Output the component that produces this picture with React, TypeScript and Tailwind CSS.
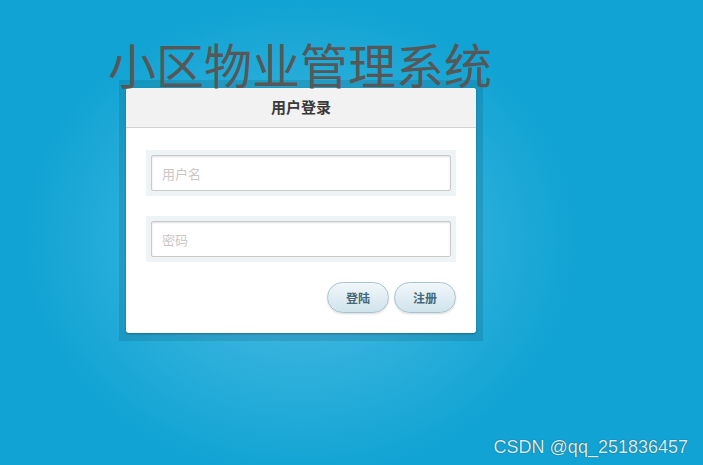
import React from 'react';

const cjk = "font-['Microsoft_YaHei','Noto_Sans_CJK_SC',sans-serif]";

function Field({ placeholder, type = 'text' }: { placeholder: string; type?: string }) {
  return (
    <div className="bg-[#eef3f6] p-[5px]">
      <input
        type={type}
        placeholder={placeholder}
        className={`block h-[36px] w-full rounded-[2px] border border-[#c9c9c9] bg-white px-[10px] text-[13px] text-[#333] shadow-[inset_0_1px_2px_rgba(0,0,0,0.12)] outline-none placeholder:text-[#cbc6c6] ${cjk}`}
      />
    </div>
  );
}

function PillButton({ label }: { label: string }) {
  return (
    <button
      className={`h-[31px] w-[62px] rounded-full border border-[#a9c4cc] bg-[linear-gradient(to_bottom,#f1f7fa,#cfe3ec)] text-[12px] font-semibold text-[#46697a] shadow-[0_1px_2px_rgba(0,0,0,0.15)] ${cjk}`}
    >
      {label}
    </button>
  );
}

export default function App() {
  return (
    <div className="relative h-[465px] w-full overflow-hidden bg-[radial-gradient(ellipse_280px_240px_at_300px_240px,#4abbe1_0%,#34b2dd_45%,#10a3d3_100%)]">
      <div className="pt-[39px]">
        <h1 className={`relative z-10 pl-[108px] text-[48px] leading-[48px] font-normal text-[#575757] ${cjk}`}>
          小区物业管理系统
        </h1>

        {/* login frame */}
        <div className="ml-[119px] mt-[-7px] w-[364px] bg-black/10 px-[7px] py-[8px]">
          <div className="overflow-hidden rounded-[3px] bg-white shadow-[0_1px_2px_rgba(0,0,0,0.3)]">
            <div className="flex h-[40px] items-center justify-center border-b border-[#d2d2d2] bg-[#f2f2f2]">
              <span className={`text-[15px] font-semibold text-[#3a3a3a] ${cjk}`}>用户登录</span>
            </div>
            <div className="px-[20px] pb-[20px] pt-[22px]">
              <div className="flex flex-col gap-[20px]">
                <Field placeholder="用户名" />
                <Field placeholder="密码" type="password" />
              </div>
              <div className="mt-[20px] flex justify-end gap-[5px]">
                <PillButton label="登陆" />
                <PillButton label="注册" />
              </div>
            </div>
          </div>
        </div>
      </div>

      {/* watermark */}
      <div className="absolute bottom-[9px] right-[15px] font-['Liberation_Sans',Arial,sans-serif] text-[18px] leading-[18px] text-[#dcebf2] [text-shadow:0_0_1px_rgba(0,0,0,0.7)]">
        CSDN @qq_251836457
      </div>
    </div>
  );
}
